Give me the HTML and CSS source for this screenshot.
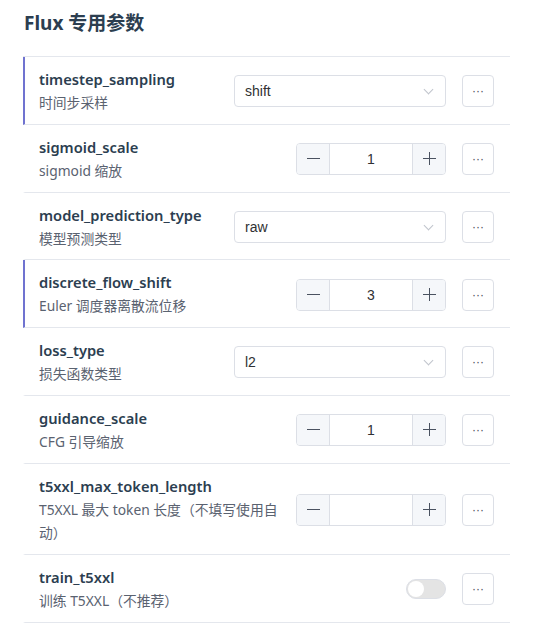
FILE: index.html
```html
<!DOCTYPE html>
<html>
<head>
    <meta charset="utf-8">
    <title>Flux 专用参数</title>
    <link rel="stylesheet" href="styles.css">
</head>
<body>
    <div class="section">
        <h3 class="section-title">Flux 专用参数</h3>
        <div class="param-list">
            <div class="param-row changed">
                <div class="param-label">
                    <div class="param-name">timestep_sampling</div>
                    <div class="param-desc">时间步采样</div>
                </div>
                <div class="param-control">
                    <div class="select"><span>shift</span><i class="arrow"></i></div>
                    <button class="more-button">···</button>
                </div>
            </div>
            <div class="param-row">
                <div class="param-label">
                    <div class="param-name">sigmoid_scale</div>
                    <div class="param-desc">sigmoid 缩放</div>
                </div>
                <div class="param-control">
                    <div class="number-input">
                        <span class="step minus"></span>
                        <span class="value">1</span>
                        <span class="step plus"></span>
                    </div>
                    <button class="more-button">···</button>
                </div>
            </div>
            <div class="param-row">
                <div class="param-label">
                    <div class="param-name">model_prediction_type</div>
                    <div class="param-desc">模型预测类型</div>
                </div>
                <div class="param-control">
                    <div class="select"><span>raw</span><i class="arrow"></i></div>
                    <button class="more-button">···</button>
                </div>
            </div>
            <div class="param-row changed">
                <div class="param-label">
                    <div class="param-name">discrete_flow_shift</div>
                    <div class="param-desc">Euler 调度器离散流位移</div>
                </div>
                <div class="param-control">
                    <div class="number-input">
                        <span class="step minus"></span>
                        <span class="value">3</span>
                        <span class="step plus"></span>
                    </div>
                    <button class="more-button">···</button>
                </div>
            </div>
            <div class="param-row">
                <div class="param-label">
                    <div class="param-name">loss_type</div>
                    <div class="param-desc">损失函数类型</div>
                </div>
                <div class="param-control">
                    <div class="select"><span>l2</span><i class="arrow"></i></div>
                    <button class="more-button">···</button>
                </div>
            </div>
            <div class="param-row">
                <div class="param-label">
                    <div class="param-name">guidance_scale</div>
                    <div class="param-desc">CFG 引导缩放</div>
                </div>
                <div class="param-control">
                    <div class="number-input">
                        <span class="step minus"></span>
                        <span class="value">1</span>
                        <span class="step plus"></span>
                    </div>
                    <button class="more-button">···</button>
                </div>
            </div>
            <div class="param-row">
                <div class="param-label">
                    <div class="param-name">t5xxl_max_token_length</div>
                    <div class="param-desc">T5XXL 最大 token 长度（不填写使用自动）</div>
                </div>
                <div class="param-control">
                    <div class="number-input">
                        <span class="step minus"></span>
                        <span class="value"></span>
                        <span class="step plus"></span>
                    </div>
                    <button class="more-button">···</button>
                </div>
            </div>
            <div class="param-row">
                <div class="param-label">
                    <div class="param-name">train_t5xxl</div>
                    <div class="param-desc">训练 T5XXL（不推荐）</div>
                </div>
                <div class="param-control">
                    <div class="switch"><span class="knob"></span></div>
                    <button class="more-button">···</button>
                </div>
            </div>
        </div>
    </div>
</body>
</html>
```

FILE: styles.css
```css
body {
    margin: 0;
    background: #fff;
    font-family: "Noto Sans", "Noto Sans CJK SC", sans-serif;
    color: #2c3e50;
}
.section {
    width: 487px;
    padding: 10px 0 0 23px;
}
.section-title {
    margin: 0 0 20px 1px;
    font-size: 19px;
    line-height: 26px;
    font-weight: 700;
    color: #2c3e50;
}
.param-list {
    border-top: 1px solid #e4e7ed;
}
.param-row {
    display: flex;
    align-items: center;
    justify-content: space-between;
    padding: 11px 16px 9.3px 14px;
    border-left: 2px solid transparent;
    border-bottom: 1px solid #e4e7ed;
}
.param-row.changed {
    border-left-color: #7073d0;
}
.param-label {
    flex: 1;
    min-width: 0;
    padding-right: 12px;
}
.param-name {
    font-size: 14.7px;
    line-height: 22px;
    font-weight: 600;
    color: #2c3e50;
}
.param-desc {
    margin-top: 1px;
    font-size: 13.8px;
    line-height: 23.5px;
    color: #5a6270;
}
.param-control {
    display: flex;
    align-items: center;
    gap: 16px;
    flex-shrink: 0;
}
.select {
    position: relative;
    box-sizing: border-box;
    width: 212px;
    height: 32px;
    border: 1px solid #dcdfe6;
    border-radius: 4px;
    padding: 0 10px;
    font-family: "Liberation Sans", sans-serif;
    font-size: 14px;
    line-height: 30px;
    color: #303133;
}
.arrow {
    position: absolute;
    right: 13px;
    top: 10px;
    width: 6px;
    height: 6px;
    border-right: 1px solid #c0c4cc;
    border-bottom: 1px solid #c0c4cc;
    transform: rotate(45deg);
}
.number-input {
    display: flex;
    box-sizing: border-box;
    width: 150px;
    height: 32px;
    border: 1px solid #dcdfe6;
    border-radius: 4px;
    overflow: hidden;
}
.step {
    position: relative;
    width: 32px;
    background: #f5f7fa;
}
.minus {
    border-right: 1px solid #dcdfe6;
}
.plus {
    border-left: 1px solid #dcdfe6;
}
.step::before, .plus::after {
    content: "";
    position: absolute;
    left: 10px;
    top: 14px;
    width: 13px;
    height: 1px;
    background: #4a5260;
}
.plus::after {
    left: 16px;
    top: 8px;
    width: 1px;
    height: 13px;
}
.value {
    flex: 1;
    text-align: center;
    font-family: "Liberation Sans", sans-serif;
    font-size: 14px;
    line-height: 30px;
    color: #303133;
}
.switch {
    position: relative;
    box-sizing: border-box;
    width: 40px;
    height: 20px;
    border: 1px solid #dcdfe6;
    border-radius: 10px;
    background: #e4e4e4;
}
.knob {
    position: absolute;
    left: 1px;
    top: 1px;
    width: 16px;
    height: 16px;
    border-radius: 50%;
    background: #fff;
}
.more-button {
    box-sizing: border-box;
    width: 32px;
    height: 32px;
    padding: 0;
    border: 1px solid #dcdfe6;
    border-radius: 4px;
    background: #fff;
    color: #4a5260;
    font-size: 12px;
    line-height: 30px;
    cursor: pointer;
}
```
